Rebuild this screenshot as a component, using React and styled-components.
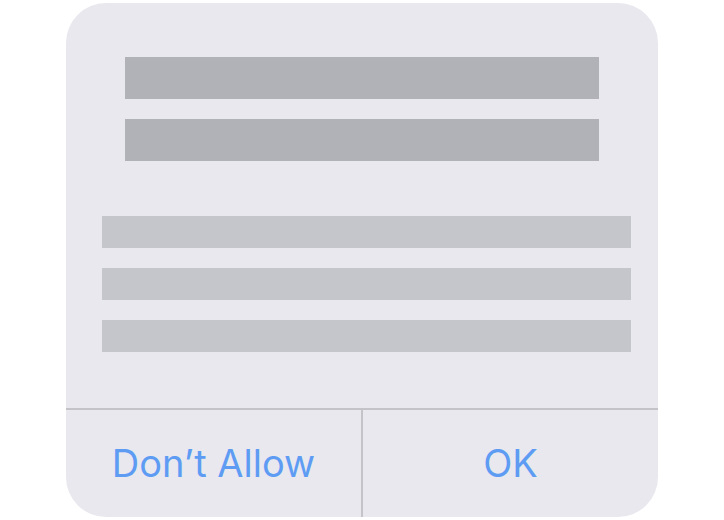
import React from 'react';
import styled, { createGlobalStyle } from 'styled-components';

const GlobalStyle = createGlobalStyle`
  html, body {
    margin: 0;
    padding: 0;
    background: #ffffff;
    font-family: Inter, "Liberation Sans", sans-serif;
  }
`;

const Page = styled.div`
  width: 724px;
  height: 520px;
  padding: 3px 0 0 66px;
  box-sizing: border-box;
`;

const Dialog = styled.div`
  width: 592px;
  height: 514px;
  background: #e8e8ee;
  border-radius: 40px;
  overflow: hidden;
  display: flex;
  flex-direction: column;
`;

const Body = styled.div`
  flex: 1;
  display: flex;
  flex-direction: column;
  padding: 54px 0 0 0;
  border-bottom: 2px solid #c3c3c8;
`;

const TitleBlock = styled.div`
  display: flex;
  flex-direction: column;
  gap: 20px;
  padding: 0 59px;
`;

const MessageBlock = styled.div`
  display: flex;
  flex-direction: column;
  gap: 20px;
  padding: 0 27px 0 36px;
  margin-top: 55px;
`;

const Bar = styled.div`
  height: ${p => p.h}px;
  background: ${p => p.color};
`;

const Actions = styled.div`
  height: 107px;
  display: flex;
`;

const Action = styled.button`
  flex: 1;
  border: none;
  background: transparent;
  font-family: Inter, "Liberation Sans", sans-serif;
  font-size: 38px;
  font-weight: 400;
  color: #5e9cf4;
  padding: 0 0 2px 0;
  cursor: pointer;
  & + & {
    border-left: 2px solid #c3c3c8;
  }
`;

export default function App() {
  return (
    <>
      <GlobalStyle />
      <Page>
        <Dialog>
          <Body>
            <TitleBlock>
              <Bar h={42} color="#b1b2b7" />
              <Bar h={42} color="#b1b2b7" />
            </TitleBlock>
            <MessageBlock>
              <Bar h={32} color="#c5c6cb" />
              <Bar h={32} color="#c5c6cb" />
              <Bar h={32} color="#c5c6cb" />
            </MessageBlock>
          </Body>
          <Actions>
            <Action>Don’t Allow</Action>
            <Action>OK</Action>
          </Actions>
        </Dialog>
      </Page>
    </>
  );
}
